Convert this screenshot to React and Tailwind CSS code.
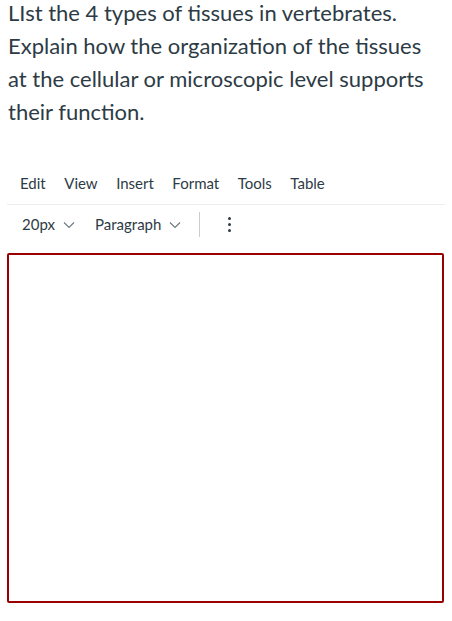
import React from 'react';

const menus = ['Edit', 'View', 'Insert', 'Format', 'Tools', 'Table'];

const Chevron = () => (
  <svg width="12" height="8" viewBox="0 0 12 8" className="ml-[8px] mt-[2px]" fill="none">
    <path d="M1 1.5 L6 6.5 L11 1.5" stroke="#6b7780" strokeWidth="1.1" />
  </svg>
);

export default function App() {
  return (
    <div className="min-h-screen bg-white font-['Lato','Noto_Sans',sans-serif] text-[#2d3b45] overflow-hidden">
      {/* Question */}
      <div className="px-[8px] -mt-[4px] text-[22px] leading-[33px]">
        <p>LIst the 4 types of tissues in vertebrates. Explain how the organization of the tissues at the cellular or microscopic level supports their function.</p>
      </div>

      {/* Editor */}
      <div className="mt-[35px] mx-[7px]">
        <div className="flex items-center gap-[18.5px] h-[42px] pb-[1px] px-[13px] text-[15px] text-[#2d3b45] border-b border-[#eceef0]">
          {menus.map((m) => (
            <span key={m}>{m}</span>
          ))}
        </div>

        <div className="flex items-center h-[38px] pl-[15px] text-[15px]">
          <span className="flex items-center">20px<Chevron /></span>
          <span className="flex items-center ml-[20px]">Paragraph<Chevron /></span>
          <span className="ml-[18px] w-px h-[25px] bg-[#c7cdd1]" />
          <span className="ml-[28px] flex flex-col gap-[3px]">
            <span className="w-[3px] h-[3px] rounded-full bg-[#2d3b45]" />
            <span className="w-[3px] h-[3px] rounded-full bg-[#2d3b45]" />
            <span className="w-[3px] h-[3px] rounded-full bg-[#2d3b45]" />
          </span>
        </div>

        <div className="mt-[10px] h-[350px] w-[437px] border-2 border-[#9b0000] rounded-[2px]" />
      </div>
    </div>
  );
}
